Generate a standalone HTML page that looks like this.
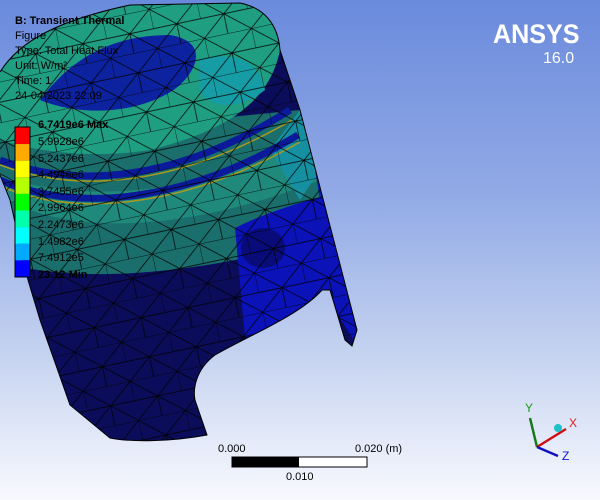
<!DOCTYPE html>
<html><head><meta charset="utf-8"><style>
html,body{margin:0;padding:0}
body{width:600px;height:500px;overflow:hidden;position:relative;font-family:"Liberation Sans",sans-serif;background:linear-gradient(#6a8adc 0%,#93abe6 40%,#c4d2f0 70%,#f8f9fe 100%)}
.t{position:absolute;font-size:11px;color:#000;white-space:nowrap;line-height:13px}
</style></head><body>
<svg width="600" height="500" style="position:absolute;left:0;top:0">
<defs>
<clipPath id="b"><path d="M0,72 C20,40 60,20 130,5 L240,3 C265,8 278,25 280,50 L300,110 L335,245 L357,330 L352,346 L345,340 L330,290 L322,290 C300,315 250,335 215,355 C195,370 193,390 195,400 L207,435 C170,442 130,442 110,438 L70,405 L40,320 L28,280 L10,200 L0,175 Z"/></clipPath>
<pattern id="m" width="48" height="40" patternUnits="userSpaceOnUse" patternTransform="rotate(-12)">
<path d="M0,0 L48,0 M0,20 L48,20 M0,0 L24,20 L48,0 M0,40 L24,20 L48,40 M24,20 L24,40 M0,0 L0,20" stroke="#000" stroke-width="0.7" fill="none"/>
</pattern>
</defs>
<g clip-path="url(#b)">
<rect x="0" y="0" width="400" height="460" fill="#0b0d5a"/>
<path d="M0,140 L0,262 C80,285 200,275 340,235 L300,110 Z" fill="#1a6e6c"/>
<path d="M0,195 C60,235 180,235 320,180 L310,140 C200,195 80,205 0,175 Z" fill="#1f8a7c"/>
<path d="M270,150 L300,110 L320,170 L300,200 Z" fill="#1690a0"/>
<path d="M300,110 L340,240 L320,200 L310,140 Z" fill="#0c1cb0"/>
<path d="M235,228 C260,215 300,202 328,195 L360,350 L322,290 C300,315 270,330 245,338 Z" fill="#0a12b8"/>
<ellipse cx="263" cy="248" rx="22" ry="20" fill="#080b78"/>
<path d="M0,72 C20,40 60,20 130,5 L240,3 C265,8 278,25 280,50 C270,100 230,130 150,150 C90,160 30,150 0,140 Z" fill="#1f9e82"/>
<path d="M40,100 C70,60 110,35 170,35 C200,40 205,60 180,85 C150,110 90,120 40,100 Z" fill="#0d229e"/>
<path d="M200,60 C230,50 260,60 265,90 C240,110 210,110 200,90 Z" fill="#159ca4"/>
<path d="M0,160 C80,190 180,180 290,110" stroke="#0a1a9a" stroke-width="7" fill="none"/>
<path d="M0,165 C80,195 180,185 292,120" stroke="#a89a20" stroke-width="1.5" fill="none"/>
<path d="M0,180 C80,215 190,200 298,135" stroke="#0a1a9a" stroke-width="7" fill="none"/>
<path d="M0,186 C80,220 190,205 300,142" stroke="#a89a20" stroke-width="1.5" fill="none"/>
<rect x="0" y="0" width="400" height="460" fill="url(#m)"/>
</g>
<path d="M0,72 C20,40 60,20 130,5 L240,3 C265,8 278,25 280,50 L300,110 L335,245 L357,330 L352,346 L345,340 L330,290 L322,290 C300,315 250,335 215,355 C195,370 193,390 195,400 L207,435 C170,442 130,442 110,438 L70,405 L40,320 L28,280 L10,200 L0,175" fill="none" stroke="#000" stroke-width="1"/>
<g stroke="#000" stroke-width="1">
<rect x="15" y="127" width="15" height="150" fill="none"/>
<rect x="15.5" y="127.5" width="14" height="16.6" fill="#f00" stroke="none"/>
<rect x="15.5" y="144.1" width="14" height="16.6" fill="#ffaa00" stroke="none"/>
<rect x="15.5" y="160.7" width="14" height="16.6" fill="#ff0" stroke="none"/>
<rect x="15.5" y="177.3" width="14" height="16.6" fill="#b4ff00" stroke="none"/>
<rect x="15.5" y="193.9" width="14" height="16.6" fill="#00ff00" stroke="none"/>
<rect x="15.5" y="210.5" width="14" height="16.6" fill="#00ffaa" stroke="none"/>
<rect x="15.5" y="227.1" width="14" height="16.6" fill="#00ffff" stroke="none"/>
<rect x="15.5" y="243.7" width="14" height="16.6" fill="#00aaff" stroke="none"/>
<rect x="15.5" y="260.3" width="14" height="16.2" fill="#0000ff" stroke="none"/>
</g>
<rect x="232" y="457" width="135" height="10" fill="#fff" stroke="#000"/>
<rect x="232" y="457" width="67" height="10" fill="#000"/>
<g stroke-width="2.5" fill="none">
<line x1="537" y1="447" x2="530" y2="418" stroke="#1a7a1a"/>
<line x1="537" y1="447" x2="566" y2="429" stroke="#d01010"/>
<line x1="537" y1="447" x2="558" y2="456" stroke="#1010c0"/>
</g>
<circle cx="558" cy="428" r="4" fill="#20c0c8"/>
<text x="525" y="412" font-size="12" fill="#1a9a1a" font-family="Liberation Sans">Y</text>
<text x="569" y="427" font-size="12" fill="#e02020" font-family="Liberation Sans">X</text>
<text x="562" y="460" font-size="12" fill="#1010e0" font-family="Liberation Sans">Z</text>
</svg>
<div class="t" style="left:15px;top:15px;font-weight:bold">B: Transient Thermal</div>
<div class="t" style="left:15px;top:30px">Figure</div>
<div class="t" style="left:15px;top:45px">Type: Total Heat Flux</div>
<div class="t" style="left:15px;top:60px">Unit: W/m²</div>
<div class="t" style="left:15px;top:75px">Time: 1</div>
<div class="t" style="left:15px;top:90px">24-04-2023 22:09</div>
<div class="t" style="left:38px;top:119px;font-weight:bold">6.7419e6 Max</div>
<div class="t" style="left:38px;top:136px">5.9928e6</div>
<div class="t" style="left:38px;top:153px">5.2437e6</div>
<div class="t" style="left:38px;top:169px">4.4946e6</div>
<div class="t" style="left:38px;top:186px">3.7455e6</div>
<div class="t" style="left:38px;top:202px">2.9964e6</div>
<div class="t" style="left:38px;top:219px">2.2473e6</div>
<div class="t" style="left:38px;top:236px">1.4982e6</div>
<div class="t" style="left:38px;top:252px">7.4912e5</div>
<div class="t" style="left:38px;top:269px;font-weight:bold">23.12 Min</div>
<div style="position:absolute;left:493px;top:19px;font-size:27px;font-weight:bold;color:#fff;font-family:'Liberation Sans',sans-serif;line-height:30px;transform:scaleX(0.93);transform-origin:left">ANSYS</div>
<div style="position:absolute;left:543px;top:50px;font-size:16px;color:#fff;font-family:'Liberation Sans',sans-serif;line-height:18px">16.0</div>
<div class="t" style="left:218px;top:443px">0.000</div>
<div class="t" style="left:355px;top:443px">0.020 (m)</div>
<div class="t" style="left:286px;top:471px">0.010</div>
</body></html>
